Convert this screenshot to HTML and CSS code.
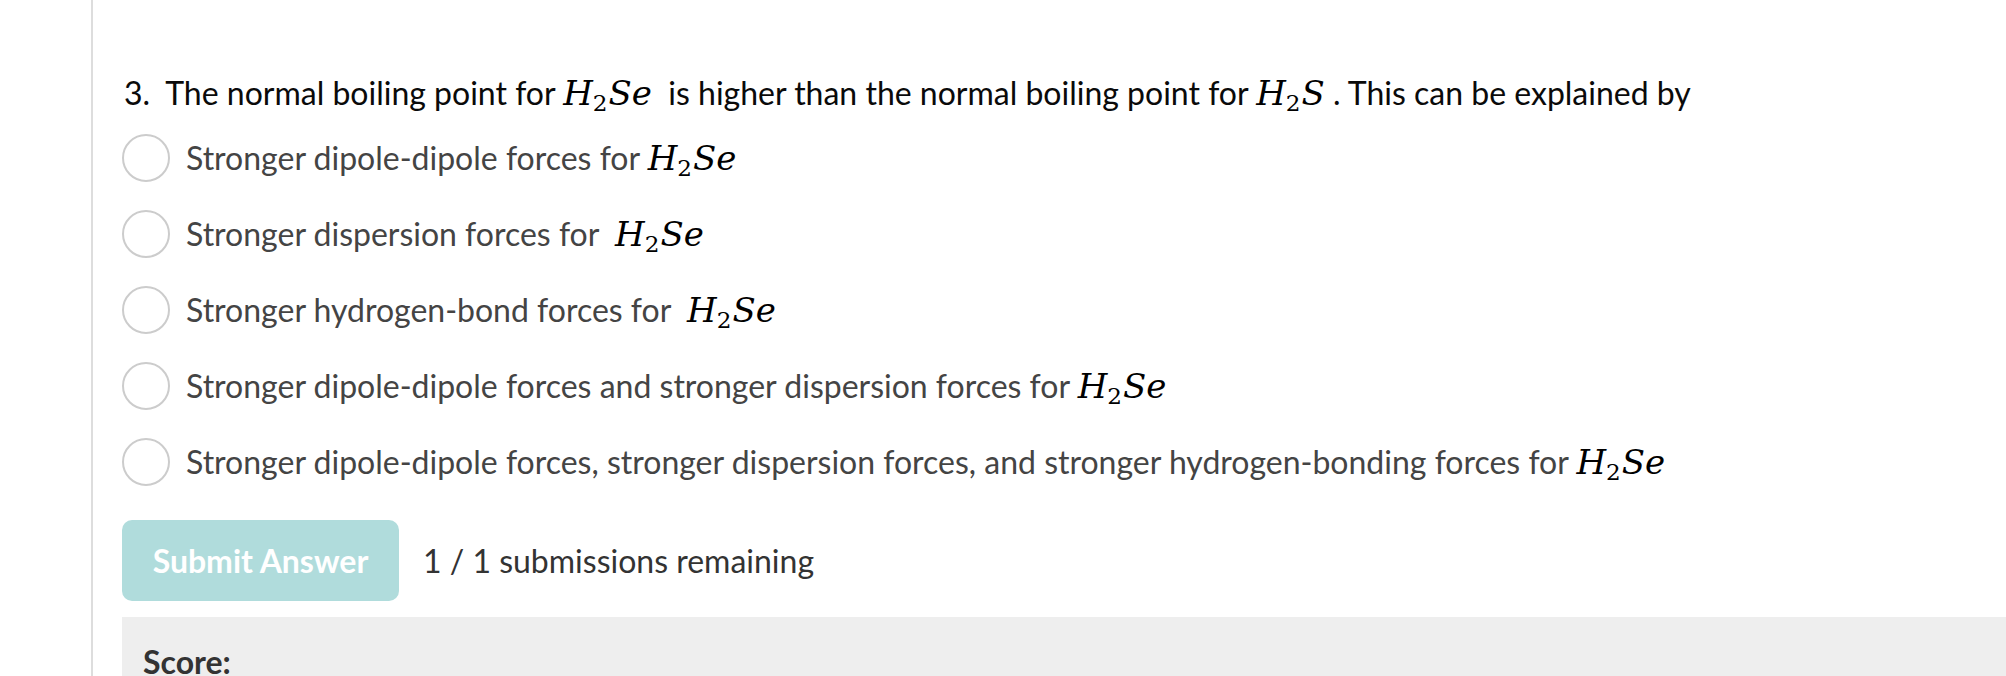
FILE: index.html
```html
<!DOCTYPE html>
<html lang="en">
<head>
<meta charset="utf-8">
<title>Question 3</title>
<link rel="stylesheet" href="styles.css">
</head>
<body>
<div class="page">
  <div class="rail"></div>
  <main class="content">
    <p class="question"><span class="qnum">3.</span> The normal boiling point for <span class="math"><i>H</i><sub>2</sub><i>Se</i></span>&nbsp; is higher than the normal boiling point for <span class="math"><i>H</i><sub>2</sub><i>S</i></span> . This can be explained by</p>
    <ul class="options">
      <li class="option"><span class="radio"></span><span class="label">Stronger dipole-dipole forces for <span class="math"><i>H</i><sub>2</sub><i>Se</i></span></span></li>
      <li class="option"><span class="radio"></span><span class="label">Stronger dispersion forces for &nbsp;<span class="math"><i>H</i><sub>2</sub><i>Se</i></span></span></li>
      <li class="option"><span class="radio"></span><span class="label">Stronger hydrogen-bond forces for &nbsp;<span class="math"><i>H</i><sub>2</sub><i>Se</i></span></span></li>
      <li class="option"><span class="radio"></span><span class="label">Stronger dipole-dipole forces and stronger dispersion forces for <span class="math"><i>H</i><sub>2</sub><i>Se</i></span></span></li>
      <li class="option"><span class="radio"></span><span class="label">Stronger dipole-dipole forces, stronger dispersion forces, and stronger hydrogen-bonding forces for <span class="math"><i>H</i><sub>2</sub><i>Se</i></span></span></li>
    </ul>
    <div class="actions">
      <button class="submit" type="button">Submit Answer</button>
      <span class="remaining">1 / 1 submissions remaining</span>
    </div>
    <div class="score-box">
      <div class="score">Score:</div>
    </div>
  </main>
</div>
</body>
</html>
```

FILE: styles.css
```css
html, body {
  margin: 0;
  padding: 0;
  background: #ffffff;
}

body {
  font-family: Lato, "Noto Sans", sans-serif;
  font-size: 32px;
  line-height: 40px;
  color: #444444;
  overflow: hidden;
}

.page {
  display: flex;
  height: 676px;
  overflow: hidden;
}

.rail {
  width: 91px;
  flex: 0 0 91px;
  border-right: 2px solid #dddddd;
}

.content {
  flex: 1;
  padding-left: 29px;
  padding-top: 73px;
}

.question {
  margin: 0;
  color: #0a0a0a;
  white-space: nowrap;
}

.qnum {
  display: inline-block;
  width: 34px;
  padding-left: 2px;
}

.math {
  font-family: "DejaVu Serif", "Liberation Serif", serif;
  font-size: 34px;
  color: #000000;
  white-space: nowrap;
}

.math i {
  font-style: italic;
}

.math sub {
  font-size: 0.68em;
  font-style: normal;
  vertical-align: -0.24em;
  line-height: 0;
  margin-left: 0;
  margin-right: 1px;
}

.options {
  list-style: none;
  margin: 7px 0 0 0;
  padding: 0;
}

.option {
  display: flex;
  align-items: center;
  height: 76px;
  white-space: nowrap;
}

.radio {
  box-sizing: border-box;
  width: 48px;
  height: 48px;
  flex: 0 0 48px;
  border: 2px solid #cccccc;
  border-radius: 50%;
  background: #ffffff;
  margin-right: 16px;
}

.label {
  color: #444444;
}

.actions {
  display: flex;
  align-items: center;
  margin-top: 20px;
}

.submit {
  box-sizing: border-box;
  width: 277px;
  height: 81px;
  border: none;
  border-radius: 10px;
  background: #b0dcdc;
  color: #ffffff;
  font-family: Lato, "Noto Sans", sans-serif;
  font-weight: 700;
  font-size: 32px;
  padding: 0;
  margin-right: 24px;
}

.remaining {
  color: #333333;
  font-size: 32px;
}

.score-box {
  margin-top: 16px;
  background: #eeeeee;
  padding: 25px 20px 0 21px;
  flex: 1;
  min-height: 60px;
}

.score {
  font-weight: 700;
  color: #333333;
}
```
